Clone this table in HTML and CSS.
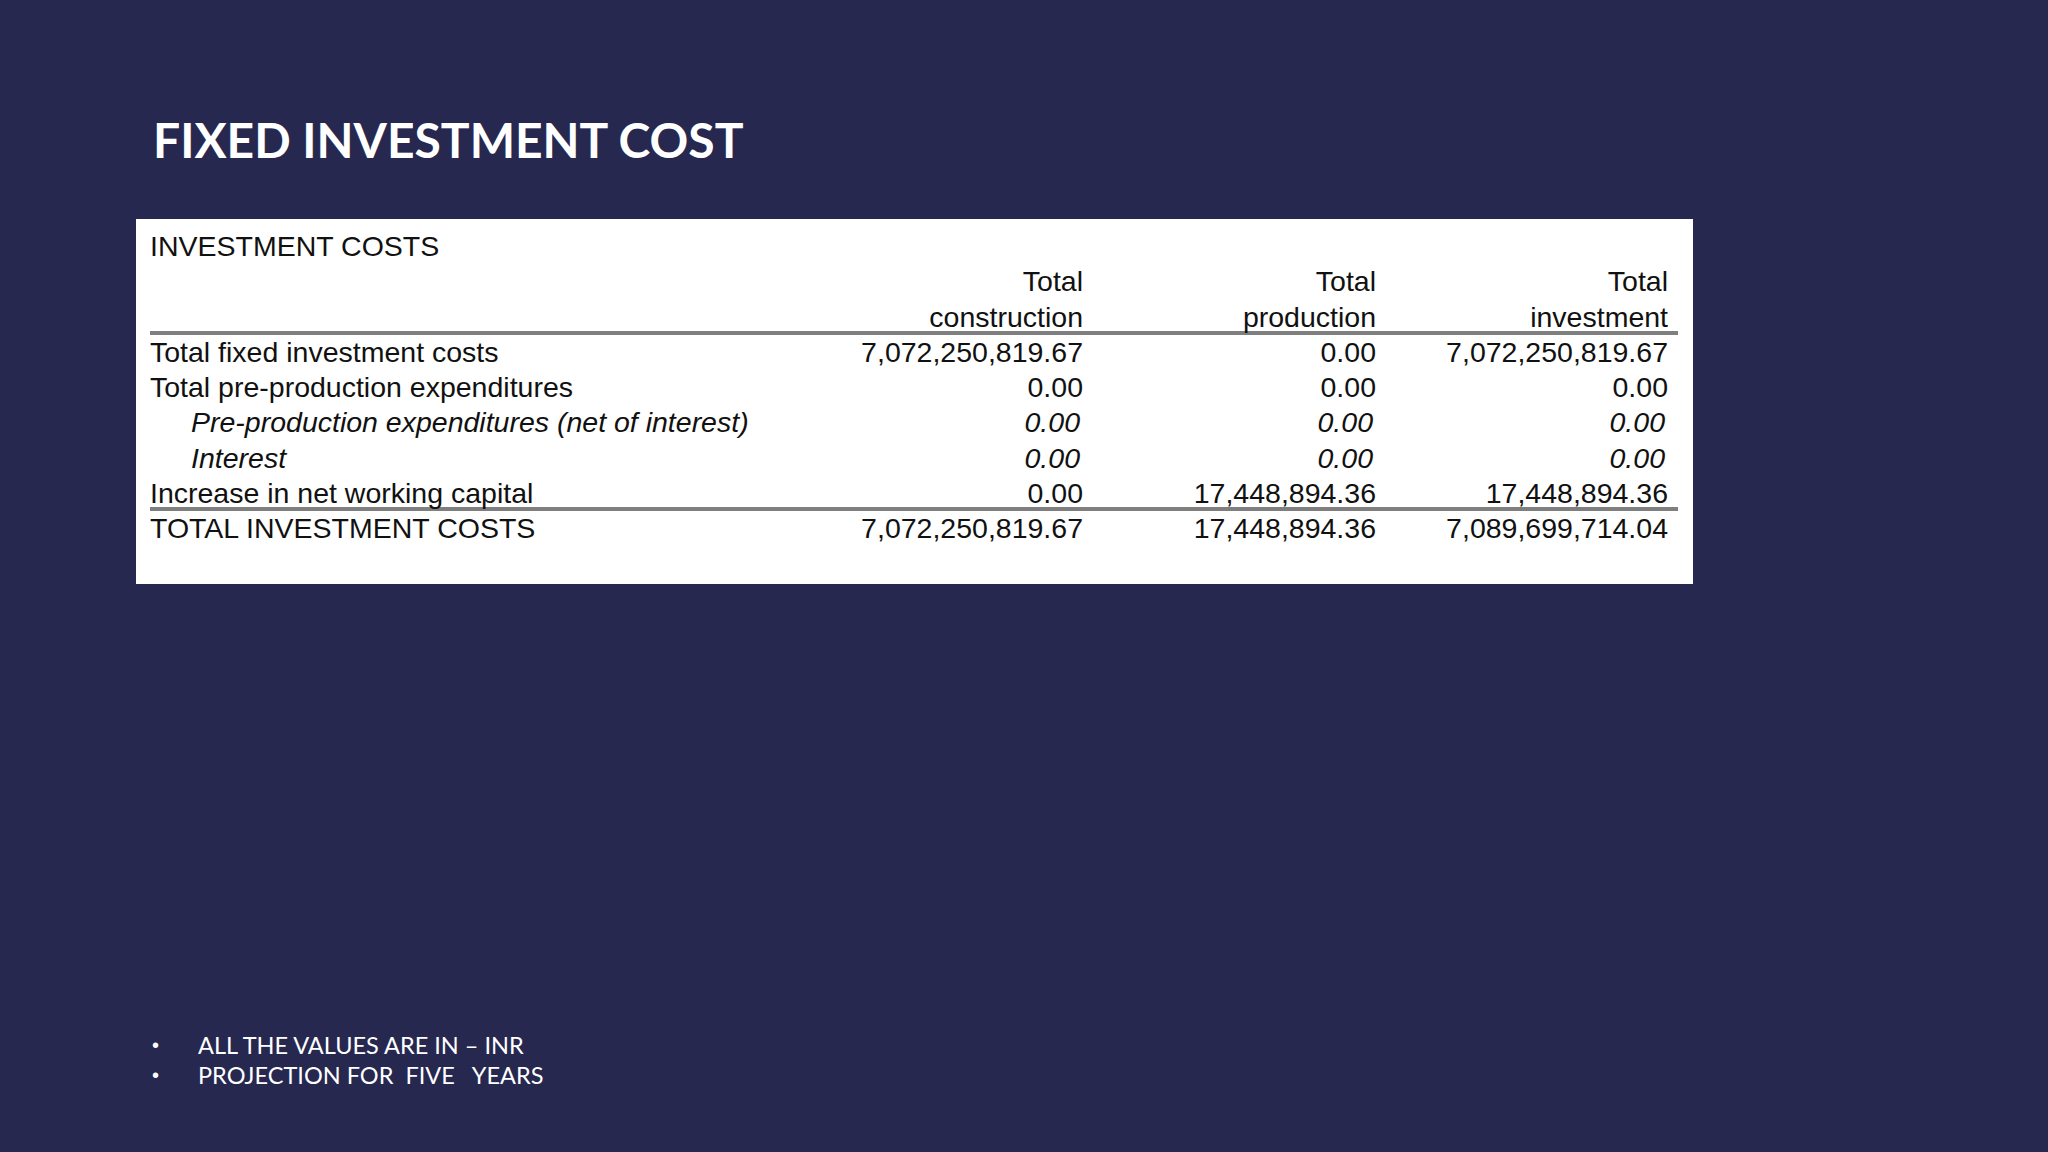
FILE: index.html
```html
<!DOCTYPE html>
<html lang="en">
<head>
<meta charset="utf-8">
<title>Fixed Investment Cost</title>
<link rel="stylesheet" href="styles.css">
</head>
<body>
<div class="slide">
  <h1 class="title">FIXED INVESTMENT COST</h1>
  <div class="panel">
    <div class="row"><div class="lbl">INVESTMENT COSTS</div></div>
    <div class="row head"><div class="lbl"></div><div class="num">Total</div><div class="num">Total</div><div class="num">Total</div></div>
    <div class="row head"><div class="lbl"></div><div class="num">construction</div><div class="num">production</div><div class="num">investment</div></div>
    <div class="rule"></div>
    <div class="row"><div class="lbl">Total fixed investment costs</div><div class="num">7,072,250,819.67</div><div class="num">0.00</div><div class="num">7,072,250,819.67</div></div>
    <div class="row"><div class="lbl">Total pre-production expenditures</div><div class="num">0.00</div><div class="num">0.00</div><div class="num">0.00</div></div>
    <div class="row sub"><div class="lbl">Pre-production expenditures (net of interest)</div><div class="num">0.00</div><div class="num">0.00</div><div class="num">0.00</div></div>
    <div class="row sub"><div class="lbl">Interest</div><div class="num">0.00</div><div class="num">0.00</div><div class="num">0.00</div></div>
    <div class="row"><div class="lbl">Increase in net working capital</div><div class="num">0.00</div><div class="num">17,448,894.36</div><div class="num">17,448,894.36</div></div>
    <div class="rule"></div>
    <div class="row"><div class="lbl">TOTAL INVESTMENT COSTS</div><div class="num">7,072,250,819.67</div><div class="num">17,448,894.36</div><div class="num">7,089,699,714.04</div></div>
  </div>
  <ul class="notes">
    <li><span class="dot">•</span><span class="txt">ALL THE VALUES ARE IN – INR</span></li>
    <li><span class="dot">•</span><span class="txt">PROJECTION FOR  FIVE   YEARS</span></li>
  </ul>
</div>
</body>
</html>
```
FILE: styles.css
```css
html, body {
  margin: 0;
  padding: 0;
  background: #262850;
}
.slide {
  width: 2048px;
  height: 1152px;
  box-sizing: border-box;
  background: #262850;
  display: flex;
  flex-direction: column;
  padding-bottom: 62px;
}
.title {
  margin: 111px 0 0 153px;
  font-family: Lato, "Open Sans", sans-serif;
  font-weight: 700;
  font-size: 48px;
  line-height: 58px;
  color: #ffffff;
  letter-spacing: 0;
}
.panel {
  margin: 50px 0 0 136px;
  width: 1557px;
  height: 365px;
  box-sizing: border-box;
  background: #ffffff;
  padding: 10px 15px 0 14px;
  font-family: "Liberation Sans", Arial, sans-serif;
  font-size: 28.5px;
  color: #111111;
}
.row {
  display: grid;
  grid-template-columns: 651px 292px 293px 292px;
  height: 35.3px;
  line-height: 35.3px;
  white-space: nowrap;
}
.num {
  text-align: right;
  padding-right: 10px;
}
.sub {
  font-style: italic;
}
.sub .lbl {
  padding-left: 41px;
}
.sub .num {
  padding-right: 13px;
}
.rule {
  height: 4px;
  margin-top: -4px;
  background: #7f7f7f;
}
.notes {
  margin: auto 0 0 0;
  padding: 0;
  list-style: none;
  font-family: Lato, "Open Sans", sans-serif;
  font-size: 23.5px;
  line-height: 30px;
  color: #ffffff;
}
.notes li {
  display: flex;
}
.dot {
  width: 46px;
  padding-left: 152px;
  font-family: "Liberation Sans", Arial, sans-serif;
  font-size: 20px;
}
.txt {
  white-space: pre;
}
```
